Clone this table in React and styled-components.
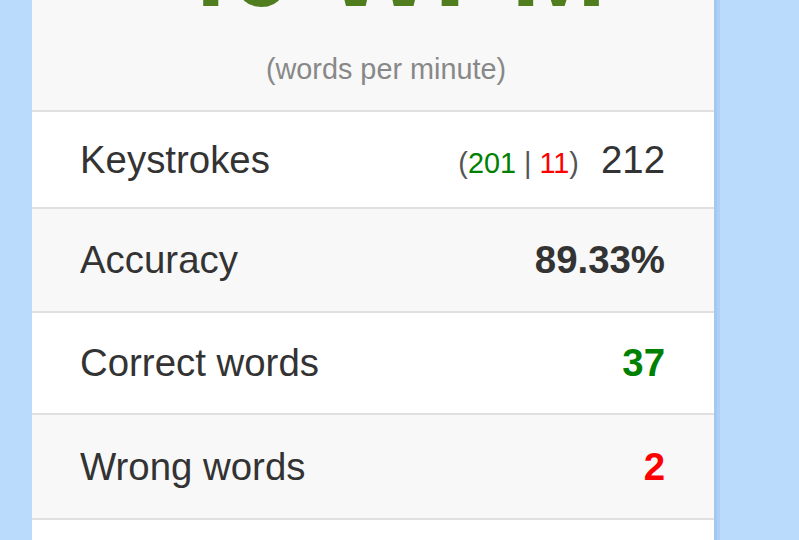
import React from "react";
import styled, { createGlobalStyle } from "styled-components";

const GlobalStyle = createGlobalStyle`
  * { box-sizing: border-box; }
  html, body {
    margin: 0;
    padding: 0;
    background: #bbdbfd;
    font-family: "Liberation Sans", Arial, sans-serif;
    overflow: hidden;
  }
`;

const stats = [
  { label: "Keystrokes", value: "212", height: 97, shade: false, split: { ok: 201, bad: 11 } },
  { label: "Accuracy", value: "89.33%", height: 104, shade: true, bold: true },
  { label: "Correct words", value: "37", height: 102, shade: false, bold: true, tone: "#008000" },
  { label: "Wrong words", value: "2", height: 105, shade: true, bold: true, tone: "#ff0000" },
  { label: "", value: "", height: 60, shade: false },
];

const App = () => {
  return (
    <>
      <GlobalStyle />
      <Page>
        <Card>
          <Header>
            <Speed>40 WPM</Speed>
            <Unit>(words per minute)</Unit>
          </Header>
          {stats.map((s, i) => (
            <Row key={i} $height={s.height} $shade={s.shade}>
              <Label>{s.label}</Label>
              <Value $bold={s.bold} $tone={s.tone}>
                {s.split && (
                  <Split>
                    (<Ok>{s.split.ok}</Ok> | <Bad>{s.split.bad}</Bad>)
                  </Split>
                )}
                {s.value}
              </Value>
            </Row>
          ))}
        </Card>
      </Page>
    </>
  );
};

const Page = styled.div`
  height: 540px;
  padding-left: 32px;
`;

const Card = styled.div`
  width: 682px;
  height: 540px;
  background: #fff;
  box-shadow: 3px 0 0 #a5c8ef, 6px 0 0 #afd0f6;
  overflow: hidden;
`;

const Header = styled.div`
  height: 112px;
  background: #f8f8f8;
  border-bottom: 2px solid #e0e0e0;
  display: flex;
  flex-direction: column;
  align-items: center;
  padding-left: 26px;
  overflow: hidden;
`;

const Speed = styled.div`
  font-size: 115px;
  line-height: 115px;
  font-weight: bold;
  color: #507d1e;
  margin-top: -91px;
  white-space: nowrap;
`;

const Unit = styled.div`
  font-size: 28.8px;
  line-height: 28.8px;
  color: #888;
  margin-top: 31px;
`;

const Row = styled.div`
  height: ${(p) => p.$height}px;
  background: ${(p) => (p.$shade ? "#f8f8f8" : "#fff")};
  border-bottom: 2px solid #e0e0e0;
  display: flex;
  align-items: center;
  justify-content: space-between;
  padding: 0 49px 0 48px;
  font-size: 38.4px;
  color: #333;
`;

const Label = styled.span``;

const Value = styled.span`
  font-weight: ${(p) => (p.$bold ? "bold" : "normal")};
  color: ${(p) => p.$tone || "#333"};
`;

const Split = styled.span`
  font-size: 28.8px;
  color: #555;
  margin-right: 22px;
`;

const Ok = styled.span`
  color: #008000;
`;

const Bad = styled.span`
  color: #ff0000;
`;

export default App;
